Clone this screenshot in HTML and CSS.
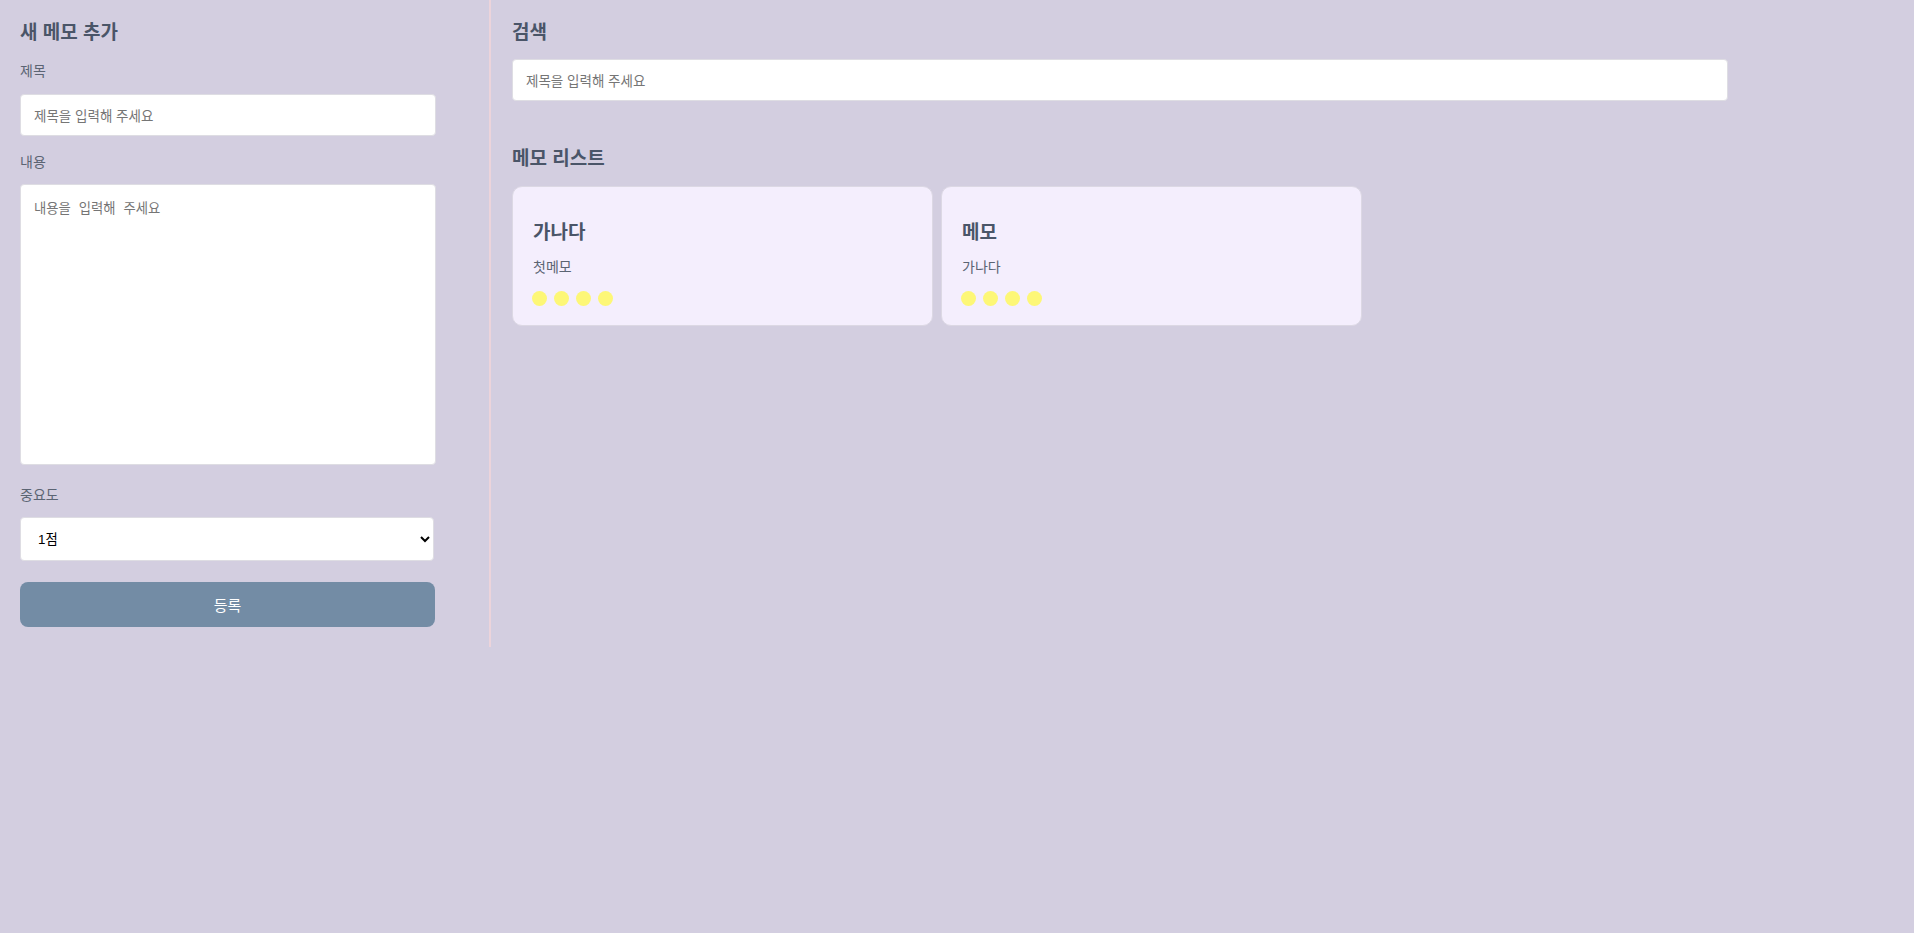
FILE: index.html
```html
<!DOCTYPE html>
<html lang="ko">
<head>
    <meta charset="utf-8">
    <title>메모장</title>
    <link rel="stylesheet" href="styles.css">
</head>
<body>
<div class="app">
    <div class="editor">
        <h2 class="title">새 메모 추가</h2>
        <label class="label label-first">제목</label>
        <input class="field field-title" type="text" placeholder="제목을 입력해 주세요">
        <label class="label">내용</label>
        <textarea class="field field-body" placeholder="내용을 입력해 주세요"></textarea>
        <label class="label label-level">중요도</label>
        <select class="field field-level">
            <option>1점</option>
            <option>2점</option>
            <option>3점</option>
            <option>4점</option>
            <option>5점</option>
        </select>
        <button class="submit">등록</button>
    </div>
    <div class="board">
        <h2 class="title">검색</h2>
        <input class="field field-search" type="text" placeholder="제목을 입력해 주세요">
        <h2 class="title title-list">메모 리스트</h2>
        <ul class="memos">
            <li class="memo">
                <h3 class="memo-title">가나다</h3>
                <p class="memo-text">첫메모</p>
                <div class="dots">
                    <span class="dot"></span><span class="dot"></span><span class="dot"></span><span class="dot"></span>
                </div>
            </li>
            <li class="memo">
                <h3 class="memo-title">메모</h3>
                <p class="memo-text">가나다</p>
                <div class="dots">
                    <span class="dot"></span><span class="dot"></span><span class="dot"></span><span class="dot"></span>
                </div>
            </li>
        </ul>
    </div>
</div>
</body>
</html>
```

FILE: styles.css
```css
html, body {
    margin: 0px;
    padding: 0px;
    height: 100%;
}

body {
    background-color: #d3cee0;
    font-family: "Noto Sans CJK KR", "Noto Sans", sans-serif;
    color: #4a5568;
}

.app {
    display: flex;
    align-items: flex-start;
}

.editor {
    display: flex;
    flex-direction: column;
    align-items: flex-start;
    width: 469px;
    padding: 19px 0px 20px 20px;
    border-right: 2px solid #ecd4db;
}

.board {
    display: flex;
    flex-direction: column;
    align-items: flex-start;
    padding: 19px 21px;
}

.title {
    margin: 0px;
    font-size: 19px;
    line-height: 24px;
    font-weight: bold;
    color: #4a5568;
}

.title-list {
    margin-top: 44px;
}

.label {
    display: block;
    margin-top: 15px;
    font-size: 14px;
    line-height: 20px;
    color: #5b6473;
}

.label-first {
    margin-top: 17px;
}

.label-level {
    margin-top: 19px;
}

.field {
    box-sizing: border-box;
    margin: 13px 0px 0px 0px;
    border: 1px solid #dedde3;
    border-radius: 4px;
    background-color: #fff;
    font-family: "Noto Sans CJK KR", sans-serif;
    font-size: 13.5px;
    color: #333;
    outline: none;
}

.field::placeholder {
    color: #757575;
}

.field-title {
    width: 416px;
    height: 42px;
    padding: 0px 13px;
    margin-top: 14px;
}

.field-body {
    display: block;
    width: 416px;
    height: 281px;
    padding: 13px 13px;
    resize: none;
    font-family: "Liberation Mono", "Noto Sans CJK KR", monospace;
    font-size: 13.33px;
}

.field-level {
    width: 414px;
    height: 44px;
    padding: 0px 13px;
    font-family: "Liberation Sans", "Noto Sans CJK KR", sans-serif;
    font-size: 13.33px;
    color: #000;
}

.field-search {
    width: 1216px;
    height: 42px;
    padding: 0px 13px;
    margin-top: 16px;
}

.submit {
    width: 415px;
    height: 45px;
    margin-top: 21px;
    border: none;
    border-radius: 8px;
    background-color: #738ca5;
    color: #fff;
    font-family: "Noto Sans CJK KR", sans-serif;
    font-size: 15px;
}

.memos {
    display: flex;
    gap: 8px;
    margin: 17px 0px 0px 0px;
    padding: 0px;
    list-style-type: none;
}

.memo {
    box-sizing: border-box;
    width: 421px;
    height: 140px;
    padding: 20px 20px 16px 20px;
    border: 1px solid #dcd8e4;
    border-radius: 10px;
    background-color: #f4eefd;
}

.memo-title {
    margin: 12px 0px 0px 0px;
    font-size: 19px;
    line-height: 24px;
    font-weight: bold;
    color: #4a5568;
}

.memo-text {
    margin: 13px 0px 0px 0px;
    font-size: 14px;
    line-height: 20px;
    color: #5b6473;
}

.dots {
    display: flex;
    gap: 7px;
    margin-top: 15px;
    margin-left: -1px;
}

.dot {
    width: 15px;
    height: 15px;
    border-radius: 50%;
    background-color: #fdf777;
}
```
